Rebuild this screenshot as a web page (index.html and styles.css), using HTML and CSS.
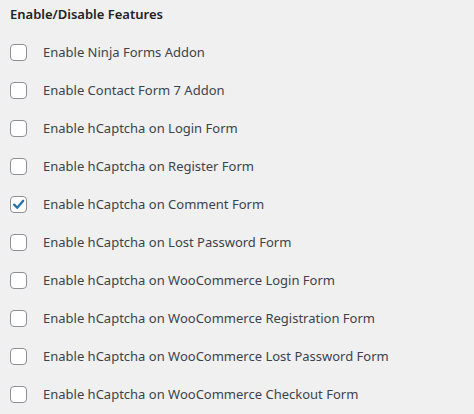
FILE: index.html
```html
<!DOCTYPE html>
<html>
<head>
<meta charset="utf-8">
<link rel="stylesheet" href="styles.css">
</head>
<body>
<div class="panel">
  <h2 class="title">Enable/Disable Features</h2>
  <ul class="list">
    <li class="row"><span class="box"></span><span class="label">Enable Ninja Forms Addon</span></li>
    <li class="row"><span class="box"></span><span class="label">Enable Contact Form 7 Addon</span></li>
    <li class="row"><span class="box"></span><span class="label">Enable hCaptcha on Login Form</span></li>
    <li class="row"><span class="box"></span><span class="label">Enable hCaptcha on Register Form</span></li>
    <li class="row"><span class="box checked"><svg viewBox="0 0 17 17" width="17" height="17"><path d="M4.2 8.6 L7.2 11.8 L13.2 4.8" fill="none" stroke="#2271b1" stroke-width="2.3" stroke-linecap="round" stroke-linejoin="round"/></svg></span><span class="label">Enable hCaptcha on Comment Form</span></li>
    <li class="row"><span class="box"></span><span class="label">Enable hCaptcha on Lost Password Form</span></li>
    <li class="row"><span class="box"></span><span class="label">Enable hCaptcha on WooCommerce Login Form</span></li>
    <li class="row"><span class="box"></span><span class="label">Enable hCaptcha on WooCommerce Registration Form</span></li>
    <li class="row"><span class="box"></span><span class="label">Enable hCaptcha on WooCommerce Lost Password Form</span></li>
    <li class="row"><span class="box"></span><span class="label">Enable hCaptcha on WooCommerce Checkout Form</span></li>
  </ul>
</div>
</body>
</html>
```

FILE: styles.css
```css
html, body {
  margin: 0;
  padding: 0;
  background: #f0f0f1;
}
body {
  font-family: "Noto Sans", "Open Sans", sans-serif;
  color: #3c434a;
  width: 474px;
  height: 414px;
  overflow: hidden;
}
.panel {
  padding: 3px 0 0 10px;
}
.title {
  margin: 0;
  font-size: 13px;
  font-weight: 600;
  color: #1d2327;
  line-height: 22px;
}
.list {
  list-style: none;
  margin: 16px 0 0 0;
  padding: 0;
  display: flex;
  flex-direction: column;
  gap: 16px;
}
.row {
  display: flex;
  align-items: center;
  height: 22px;
}
.box {
  width: 17px;
  height: 17px;
  box-sizing: border-box;
  border: 1px solid #8c8f94;
  border-radius: 4px;
  background: #fff;
  flex: none;
  position: relative;
}
.box svg {
  position: absolute;
  left: -1px;
  top: -1px;
}
.label {
  margin-left: 16px;
  font-size: 13px;
  line-height: 22px;
}
```
